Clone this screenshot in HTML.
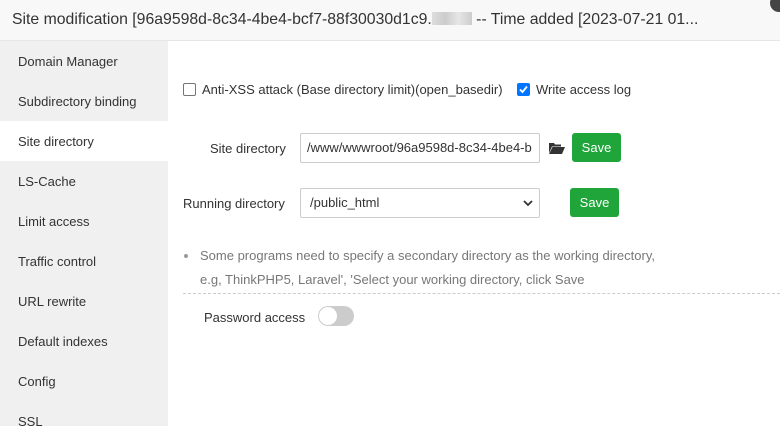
<!DOCTYPE html>
<html><head><style>
*{margin:0;padding:0;box-sizing:border-box}
body{width:780px;height:426px;overflow:hidden;background:#fff;font-family:"Liberation Sans",sans-serif;color:#333;position:relative}
.hd{position:absolute;left:0;top:0;width:780px;height:41px;background:#f8f8f8;border-bottom:1px solid #e6e6e6;font-size:15.8px;line-height:40px;padding-left:12px;color:#333;white-space:nowrap}
.blur{display:inline-block;width:40px;height:13px;background:linear-gradient(90deg,#ddd,#ccc,#e6e6e6,#ccc);vertical-align:-1px}
.close{position:absolute;left:770px;top:-6px;width:18px;height:18px;border-radius:50%;background:#444}
.sb{position:absolute;left:0;top:41px;width:168px;height:385px;background:#f0f0f0}
.sb div{height:40px;line-height:42px;padding-left:18px;font-size:13px;color:#333}
.sb .on{background:#fff}
.t{position:absolute;font-size:13px;color:#333;white-space:nowrap}
.cb{position:absolute;width:13px;height:13px;border:1px solid #767676;border-radius:2px;background:#fff}
.cb.ck{background:#0075ff;border-color:#0075ff}
.inp{position:absolute;height:30px;border:1px solid #ccc;border-radius:2px;font-size:13px;line-height:28px;padding-left:6px;color:#333;background:#fff;overflow:hidden;white-space:nowrap}
.btn{position:absolute;height:29px;background:#20a53a;color:#fff;border-radius:3px;font-size:13px;line-height:29px;text-align:center}
.gray{color:#777}
.dash{position:absolute;left:183px;top:293px;width:597px;border-top:1px dashed #ccc}
.tog{position:absolute;left:318px;top:306px;width:36px;height:20px;border-radius:10px;background:#ccc}
.tog:after{content:"";position:absolute;left:1px;top:1px;width:18px;height:18px;border-radius:50%;background:#fff}
</style></head><body>
<div class="hd">Site modification [96a9598d-8c34-4be4-bcf7-88f30030d1c9.<span class="blur"></span> -- Time added [2023-07-21 01...</div>
<div class="close"></div>
<div class="sb">
<div>Domain Manager</div><div>Subdirectory binding</div><div class="on">Site directory</div><div>LS-Cache</div><div>Limit access</div><div>Traffic control</div><div>URL rewrite</div><div>Default indexes</div><div>Config</div><div>SSL</div>
</div>
<div class="cb" style="left:183px;top:83px"></div>
<div class="t" style="left:202px;top:82px">Anti-XSS attack (Base directory limit)(open_basedir)</div>
<div class="cb ck" style="left:517px;top:83px"><svg width="11" height="11" viewBox="0 0 11 11" style="position:absolute;left:0;top:0"><path d="M2 5.5l2.5 2.5 4.5-5.5" stroke="#fff" stroke-width="1.8" fill="none"/></svg></div>
<div class="t" style="left:536px;top:82px">Write access log</div>
<div class="t" style="left:210px;top:141px">Site directory</div>
<div class="inp" style="left:300px;top:133px;width:240px">/www/wwwroot/96a9598d-8c34-4be4-b</div>
<svg style="position:absolute;left:549px;top:142px" width="16" height="12" viewBox="0 0 16 12"><path d="M0 1h5l1 1.5h6v2H3L0 11z" fill="#333"/><path d="M3.5 5H16l-3 7H0z" fill="#333"/></svg>
<div class="btn" style="left:572px;top:133px;width:49px">Save</div>
<div class="t" style="left:183px;top:196px">Running directory</div>
<div class="inp" style="left:300px;top:188px;width:240px;padding-left:9px">/public_html</div>
<svg style="position:absolute;left:523px;top:199px" width="10" height="8" viewBox="0 0 10 8"><path d="M1 2l4 4 4-4" stroke="#333" stroke-width="1.8" fill="none"/></svg>
<div class="btn" style="left:570px;top:188px;width:49px">Save</div>
<div style="position:absolute;left:184px;top:254px;width:4px;height:4px;border-radius:50%;background:#999"></div>
<div class="t gray" style="left:200px;top:248px;font-size:13px">Some programs need to specify a secondary directory as the working directory,</div>
<div class="t gray" style="left:200px;top:272px;font-size:13px">e.g, ThinkPHP5, Laravel', 'Select your working directory, click Save</div>
<div class="dash"></div>
<div class="t" style="left:204px;top:310px">Password access</div>
<div class="tog"></div>
</body></html>
